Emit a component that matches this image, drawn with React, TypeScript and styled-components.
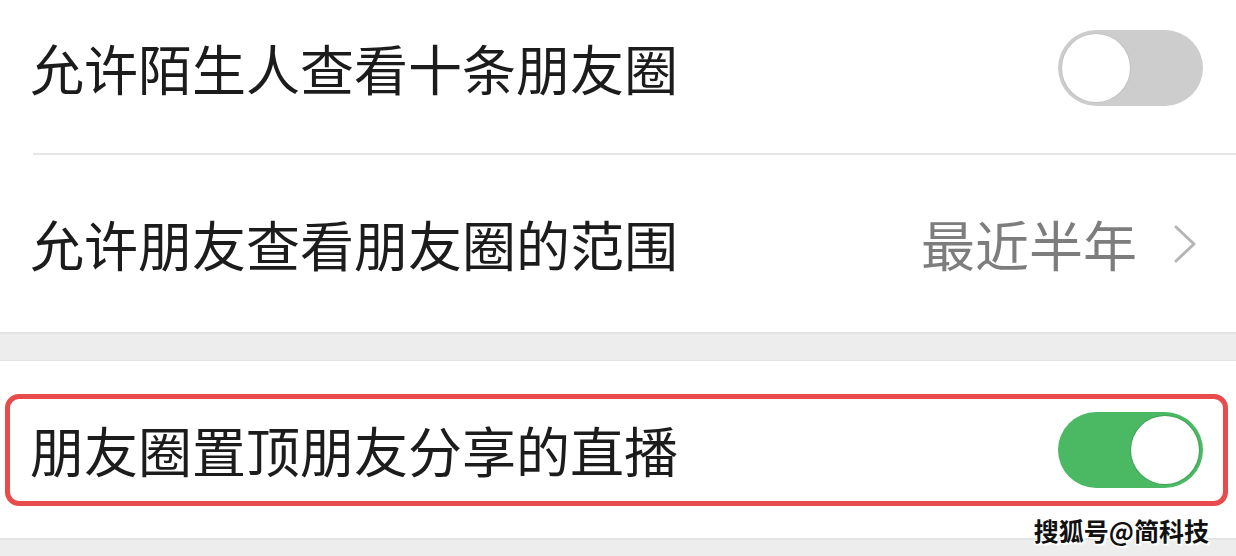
import styled, { createGlobalStyle } from "styled-components";

const GlobalStyle = createGlobalStyle`
  html, body {
    margin: 0;
    padding: 0;
    background: #ffffff;
  }
  body {
    font-family: "Noto Sans CJK SC", "Noto Sans", sans-serif;
    color: #1c1c1c;
  }
`;

const Toggle = ({ on }: { on?: boolean }) => (
  <Track $on={on}>
    <Thumb $on={on} />
  </Track>
);

const Chevron = () => (
  <svg width="24" height="38" viewBox="0 0 24 38">
    <polyline
      points="3,2 21,19 3,36"
      fill="none"
      stroke="#b5b5b5"
      strokeWidth="3"
      strokeLinecap="round"
      strokeLinejoin="round"
    />
  </svg>
);

export default function App() {
  return (
    <>
      <GlobalStyle />
      <Page>
        <Group>
          <Row $height={155} $divider>
            <Label>允许陌生人查看十条朋友圈</Label>
            <Toggle />
          </Row>
          <Row $height={177}>
            <Label>允许朋友查看朋友圈的范围</Label>
            <Detail>
              <Value>最近半年</Value>
              <Chevron />
            </Detail>
          </Row>
        </Group>
        <Gap />
        <HighlightRow>
          <Highlight>
            <Label>朋友圈置顶朋友分享的直播</Label>
            <Toggle on />
          </Highlight>
        </HighlightRow>
        <Footer />
        <Watermark>搜狐号@简科技</Watermark>
      </Page>
    </>
  );
}

const Page = styled.div`
  position: relative;
  width: 1236px;
  height: 556px;
  overflow: hidden;
  display: flex;
  flex-direction: column;
  background: #ffffff;
`;

const Group = styled.div`
  display: flex;
  flex-direction: column;
  background: #ffffff;
`;

const Row = styled.div<{ $height: number; $divider?: boolean }>`
  position: relative;
  height: ${(p) => p.$height}px;
  box-sizing: border-box;
  padding: 0 33px ${(p) => (p.$divider ? 20 : 0)}px 30px;
  display: flex;
  align-items: center;
  justify-content: space-between;

  ${(p) =>
    p.$divider &&
    `
    &::after {
      content: "";
      position: absolute;
      left: 33px;
      right: 0;
      bottom: 0;
      height: 2px;
      background: #e6e6e6;
    }
  `}
`;

const Label = styled.span`
  font-size: 54px;
  line-height: 1;
  font-weight: 400;
  color: #1c1c1c;
  letter-spacing: 0;
`;

const Detail = styled.div`
  display: flex;
  align-items: center;
  gap: 36px;
  margin-right: 6px;
`;

const Value = styled.span`
  font-size: 54px;
  line-height: 1;
  color: #7d7d7d;
`;

const Gap = styled.div`
  height: 26px;
  background: #ededed;
  border-top: 2px solid #e2e2e2;
  border-bottom: 1px solid #e2e2e2;
`;

const HighlightRow = styled.div`
  height: 177px;
  box-sizing: border-box;
  padding: 33px 8px 32px 5px;
  display: flex;
  background: #ffffff;
`;

const Highlight = styled.div`
  flex: 1;
  box-sizing: border-box;
  border: 5px solid #e84b4b;
  border-radius: 14px;
  padding: 0 20px 0 20px;
  display: flex;
  align-items: center;
  justify-content: space-between;
`;

const Footer = styled.div`
  flex: 1;
  background: #ededed;
  border-top: 2px solid #e4e4e4;
`;

const Track = styled.div<{ $on?: boolean }>`
  width: 145px;
  height: 76px;
  box-sizing: border-box;
  border-radius: 38px;
  padding: 4px;
  display: flex;
  justify-content: ${(p) => (p.$on ? "flex-end" : "flex-start")};
  align-items: center;
  background: ${(p) => (p.$on ? "#4bb864" : "#cdcdcd")};
`;

const Thumb = styled.div<{ $on?: boolean }>`
  width: 68px;
  height: 68px;
  border-radius: 50%;
  background: #ffffff;
  box-shadow: 0 0 0 1px ${(p) => (p.$on ? "#3fa457" : "#c2c2c2")};
`;

const Watermark = styled.div`
  position: absolute;
  right: 27px;
  bottom: 13px;
  font-size: 25px;
  line-height: 1;
  font-weight: 700;
  color: #111111;
  text-shadow: 1px 1px 0 #ffffff, -1px -1px 0 #ffffff, 1px -1px 0 #ffffff,
    -1px 1px 0 #ffffff, 2px 2px 1px #ffffff;
`;
